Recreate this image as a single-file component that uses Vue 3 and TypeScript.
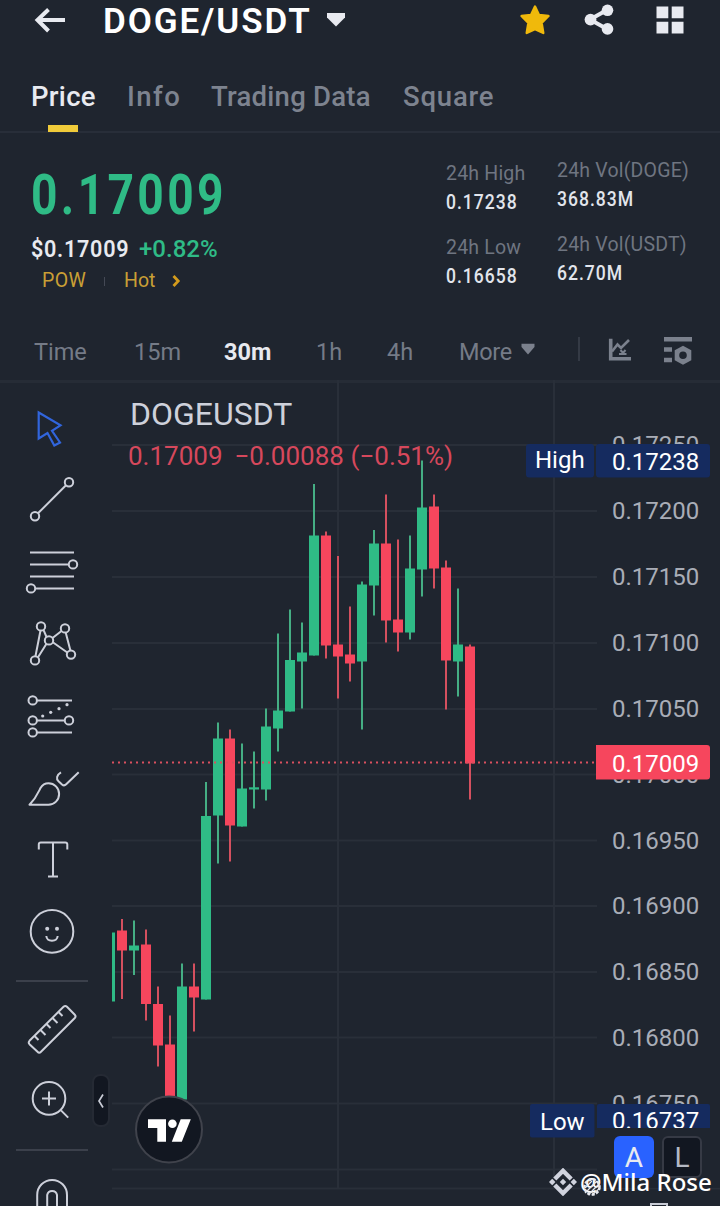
<script setup lang="ts">
interface Candle {
  x: number
  top: number
  bottom: number
  high: number
  low: number
  up: boolean
}

const raw: [number, number, number, number, number][] = [
  [930.5, 950.5, 919, 999, 0],
  [945.5, 950.5, 920.5, 975, 1],
  [944.5, 1004, 929.5, 1020.5, 0],
  [1004, 1045.5, 986.5, 1066.5, 0],
  [1044.5, 1096, 1015.5, 1096, 0],
  [986.5, 1099.5, 963.5, 1099.5, 1],
  [986.5, 997.5, 963.5, 1031.5, 0],
  [816, 999.5, 782, 999.5, 1],
  [738.5, 815.5, 722.5, 863.5, 1],
  [738.5, 825.5, 729.5, 861.5, 0],
  [788.5, 826.5, 743.5, 826.5, 1],
  [787.3, 789.5, 751.5, 808.5, 1],
  [726.5, 789.5, 708.5, 800.5, 1],
  [710.5, 728.5, 633.5, 751.5, 1],
  [660, 711.5, 609.5, 711.5, 1],
  [652.5, 661.5, 622.5, 708.5, 1],
  [535.5, 655.5, 484, 655.5, 1],
  [535.5, 645.5, 531.5, 658.5, 0],
  [644.5, 656.5, 556, 698.5, 0],
  [654.5, 663.5, 606.5, 681.5, 0],
  [584.5, 661.5, 581.5, 729.5, 1],
  [543.5, 585.5, 530, 615.5, 1],
  [543.5, 620.5, 494.5, 642.5, 0],
  [619.5, 632.5, 539.5, 651.5, 0],
  [568.5, 632.5, 535.5, 639.5, 1],
  [507.5, 569.5, 460.5, 596.5, 1],
  [506.5, 568.5, 494.5, 588.5, 0],
  [567.5, 660.5, 560.5, 709.5, 0],
  [644.5, 661.5, 588.5, 696.5, 1],
  [646.5, 763.5, 644.5, 799.5, 0],
]

const candles: Candle[] = raw.map(([top, bottom, high, low, up], i) => ({
  x: 122 + i * 12,
  top,
  bottom,
  high,
  low,
  up: up === 1,
}))

const levels = [
  { y: 445, label: '0.17250' },
  { y: 511, label: '0.17200' },
  { y: 577, label: '0.17150' },
  { y: 643, label: '0.17100' },
  { y: 709, label: '0.17050' },
  { y: 774.5, label: '0.17000' },
  { y: 840.5, label: '0.16950' },
  { y: 906, label: '0.16900' },
  { y: 972, label: '0.16850' },
  { y: 1037.5, label: '0.16800' },
  { y: 1103.5, label: '0.16750' },
]

const tabs = ['Price', 'Info', 'Trading Data', 'Square']
const frames = ['Time', '15m', '30m', '1h', '4h']
const stats = [
  [
    { name: '24h High', value: '0.17238' },
    { name: '24h Low', value: '0.16658' },
  ],
  [
    { name: '24h Vol(DOGE)', value: '368.83M' },
    { name: '24h Vol(USDT)', value: '62.70M' },
  ],
]
</script>

<template>
  <main class="screen">
    <header class="topbar">
      <svg class="back" viewBox="0 0 32 26" width="32" height="26">
        <path d="M31 13H4M14.5 2.500L3.500 13L14.500 24" fill="none" stroke="#e8eaf0" stroke-width="4" />
      </svg>
      <h1 class="pair">DOGE/USDT</h1>
      <svg class="caret" viewBox="0 0 20 16" width="20" height="16">
        <path d="M1 1H19V5.500L10 14.500L1 5.500Z" fill="#e8eaf0" />
      </svg>
      <svg class="star" viewBox="0 0 32 32" width="32" height="32">
        <path d="M16 2.500L20 11L29.500 12L22.600 18.800L24.300 29L16 25.200L7.700 29L9.400 18.800L2.500 12L12 11Z" fill="#f0b90b" stroke="#f0b90b" stroke-width="2.400" stroke-linejoin="round" />
      </svg>
      <svg class="share" viewBox="0 0 32 32" width="32" height="32">
        <path d="M24 6L7 15.500L24 25" fill="none" stroke="#e8eaf0" stroke-width="4" />
        <circle cx="24.500" cy="6.300" r="5.800" fill="#e8eaf0" />
        <circle cx="7.500" cy="15.600" r="5.900" fill="#e8eaf0" />
        <circle cx="24.500" cy="24.900" r="5.800" fill="#e8eaf0" />
      </svg>
      <svg class="apps" viewBox="0 0 28 28" width="28" height="28">
        <path d="M.500 .500H12.300V12.300H.500ZM15.700 .500H27.500V12.300H15.700ZM.500 15.700H12.300V27.500H.500ZM15.700 15.700H27.500V27.500H15.700Z" fill="#e8eaf0" />
      </svg>
    </header>

    <nav class="tabs">
      <a v-for="(t, i) in tabs" :key="t" :class="['tab', 't' + i, { active: i === 0 }]">{{ t }}</a>
    </nav>

    <section class="summary">
      <div class="quote">
        <div class="last"><span>0.17009</span></div>
        <div class="fiat"><b><span>$0.17009</span></b><em>+0.82%</em></div>
        <div class="tags">
          <span class="pow">POW</span>
          <i></i>
          <span class="hot">Hot</span>
          <svg viewBox="0 0 10 14" width="10" height="14">
            <path d="M2.500 2L7.200 7L2.500 12" fill="none" stroke="#d39b1c" stroke-width="2.800" />
          </svg>
        </div>
      </div>
      <div v-for="(col, c) in stats" :key="c" :class="['stats', 's' + c]">
        <dl v-for="s in col" :key="s.name">
          <dt>{{ s.name }}</dt>
          <dd><span>{{ s.value }}</span></dd>
        </dl>
      </div>
    </section>

    <nav class="frames">
      <a v-for="(f, i) in frames" :key="f" :class="['f' + i, { active: i === 2 }]">{{ f }}</a>
      <a class="more">More</a>
      <svg class="tri" viewBox="0 0 14 12" width="14" height="12">
        <path d="M.500 .800H13.500V4L7 11.500L.500 4Z" fill="#7b818d" />
      </svg>
      <i class="sep"></i>
      <svg class="ind" viewBox="0 0 24 24" width="24" height="24">
        <path d="M2.700 .800V20.700H23" fill="none" stroke="#7b818d" stroke-width="3.600" />
        <path d="M4 13.500L9.500 6.500L13 10L21 2" fill="none" stroke="#7b818d" stroke-width="2.600" />
        <path d="M11 16H18.500M12.500 12L15 15L17.500 12" fill="none" stroke="#7b818d" stroke-width="2" />
      </svg>
      <svg class="cfg" viewBox="0 0 28 30" width="28" height="30">
        <path d="M0 3.300H28M0 13.500H8M0 24H8" stroke="#7b818d" stroke-width="4.600" />
        <path fill-rule="evenodd" d="M19 9.800L27.300 14.300V24.200L19 28.700L10.700 24.200V14.300ZM19 15.500A3.800 3.800 0 1 0 19 23.100A3.800 3.800 0 1 0 19 15.500Z" fill="#7b818d" />
      </svg>
    </nav>

    <section class="workspace">
      <aside class="rail">
        <svg class="tool" viewBox="16 393 72 72">
          <path class="pointer" d="M38.700 412.500L60.500 425.300L52 430.800L60 442.500L54.300 445.500L47.500 433L38.700 438.500Z" />
        </svg>
        <svg class="tool" viewBox="16 465 72 72">
          <circle cx="69" cy="482.300" r="4.200" /><circle cx="35" cy="516.300" r="4.200" />
          <path d="M66 485.300L38 513.300" />
        </svg>
        <svg class="tool" viewBox="16 537 72 72">
          <path d="M30 552.400H74M30 564.400H69M30 576.400H74M35 588.400H74" />
          <circle cx="73" cy="564.400" r="4.200" /><circle cx="31" cy="588.400" r="4.200" />
        </svg>
        <svg class="tool" viewBox="16 609 72 72">
          <path d="M40.500 630.500L35.500 656M43.500 629.800L46.500 637M46.500 643.700L38 657.300M52.500 638L61.500 631M65.700 632.500L70.400 650.500M52.800 642.300L67.300 652.500" />
          <circle cx="41" cy="626.400" r="4.200" /><circle cx="65" cy="628.400" r="4.200" />
          <circle cx="49" cy="640.400" r="4.200" /><circle cx="71" cy="654.600" r="4.200" />
          <circle cx="35" cy="660.400" r="4.200" />
        </svg>
        <svg class="tool" viewBox="16 681 72 72">
          <path d="M37 700.400H72M37 720.400H65M37 732.400H72" />
          <circle cx="32.700" cy="700.400" r="4.200" /><circle cx="32.700" cy="720.400" r="4.200" />
          <circle cx="69" cy="720.400" r="4.200" /><circle cx="32.700" cy="732.400" r="4.200" />
          <g class="solid">
            <circle cx="42.700" cy="716" r="1.600" /><circle cx="50.700" cy="712.300" r="1.600" />
            <circle cx="59" cy="708.700" r="1.600" /><circle cx="67" cy="704.700" r="1.600" />
          </g>
        </svg>
        <svg class="tool" viewBox="16 753 72 72">
          <path d="M29.500 804.800C36 798 38 793 40.500 788C42.500 784.500 45 783.200 48.500 783.200A10.500 10.700 0 0 1 48.500 804.800ZM61 772.300C56.500 775 56 779 58.500 781.200L62 784.500C63.500 785.800 65 785.500 66.200 784.300L78.700 772.300" stroke-linejoin="round" />
        </svg>
        <svg class="tool" viewBox="16 825 72 72">
          <path d="M38.800 849.500V844.300Q38.800 842.400 40.800 842.400H65.300Q67.300 842.400 67.300 844.300V849.500M53 842.400V876.600M48 876.600H58" />
        </svg>
        <svg class="tool" viewBox="16 897 72 72">
          <circle cx="52" cy="931.400" r="21.300" />
          <path d="M46.300 936C47 942.300 57 942.300 57.700 936" />
          <g class="solid"><circle cx="47.200" cy="928.700" r="2" /><circle cx="57" cy="928.700" r="2" /></g>
        </svg>
        <hr class="first" />
        <svg class="tool" viewBox="16 993 72 72">
          <path d="M63.500 1006.800Q65.300 1005.200 67 1006.800L74.800 1014.700Q76.300 1016.300 74.800 1018L41 1051.800Q39.200 1053.600 37.500 1051.800L29.500 1044.200Q28 1042.500 29.500 1040.800Z" />
          <path d="M34.500 1036L38.500 1040M40.500 1030L45.500 1035M46.500 1024L50.500 1028M52.500 1018L57.500 1023M58.500 1012L62.500 1016" />
        </svg>
        <svg class="tool" viewBox="16 1065 72 72">
          <circle cx="49" cy="1098.400" r="16.300" />
          <path d="M42 1098.400H56M49 1091.400V1105.400M61 1110.400L68.200 1117.600" />
        </svg>
        <hr class="second" />
        <svg class="tool" viewBox="16 1161 72 72">
          <path d="M37.200 1210V1195A14.800 15 0 0 1 67 1195V1210M47.200 1210V1195A5 5 0 0 1 57 1195V1210" />
        </svg>
      </aside>

      <svg class="plot" viewBox="112 380 608 826" width="608" height="826">
        <g class="grid">
          <line v-for="l in levels" :key="l.y" x1="112" x2="597" :y1="l.y" :y2="l.y" />
          <line x1="112" x2="597" y1="1169.500" y2="1169.500" />
          <line x1="112" x2="720" y1="1188.500" y2="1188.500" />
          <line x1="338" x2="338" y1="380" y2="1188" />
          <line x1="554" x2="554" y1="380" y2="1188" />
        </g>
        <rect x="112" y="932.500" width="3" height="69" fill="#2fbb86" />
        <g v-for="c in candles" :key="c.x" :class="c.up ? 'up' : 'down'">
          <rect class="wick" :x="c.x - 1" :y="c.high" width="2" :height="c.low - c.high" />
          <rect :x="c.x - 5" :y="c.top" width="10" :height="c.bottom - c.top" />
        </g>
        <line x1="112" x2="596" y1="762.500" y2="762.500" stroke="#d9505f" stroke-width="2" stroke-dasharray="2 4" />

        <text class="symbol" x="130" y="424.500">DOGEUSDT</text>
        <g class="change">
          <text x="128" y="464.500">0.17009</text>
          <text x="234.500" y="464.500">−0.00088</text>
          <text x="350.500" y="464.500">(−0.51%)</text>
        </g>

        <g class="axis">
          <text v-for="l in levels" :key="l.label" x="612" :y="l.y + 8.200">{{ l.label }}</text>
        </g>

        <g class="tag">
          <rect x="526" y="444" width="68" height="33.500" rx="3" />
          <rect x="596" y="444" width="114" height="33.500" rx="3" />
          <text x="535" y="467.500">High</text>
          <text x="612" y="469.500">0.17238</text>
          <rect x="530" y="1104" width="64.500" height="33.500" rx="2" />
          <rect x="597" y="1104" width="113" height="33.500" rx="2" />
          <text x="540" y="1129.500">Low</text>
          <text x="612" y="1129.300">0.16737</text>
        </g>
        <rect x="597" y="1128" width="123" height="59.500" fill="#1f252f" />
        <path d="M596 745H707Q710 745 710 748V776.500Q710 779.500 707 779.500H596Z" fill="#f6465d" />
        <text class="now" x="612" y="771.500">0.17009</text>

        <path d="M651 1206V1204H667V1206" fill="none" stroke="#c9ccd6" stroke-width="2" />

        <circle cx="169" cy="1129.500" r="33" fill="#121721" stroke="#40434c" stroke-width="2" />
        <path d="M148 1119.300H166V1141.700H157.300V1128H148ZM180.700 1119.300H190.800L181.800 1141.700H171.800Z" fill="#fff" />
        <circle cx="172.400" cy="1123.700" r="4.300" fill="#fff" />
      </svg>

      <div class="handle">
        <svg viewBox="0 0 8 16" width="8" height="16">
          <path d="M6 1.500L2 8L6 14.500" fill="none" stroke="#c9ccd6" stroke-width="1.700" />
        </svg>
      </div>
      <div class="scale">
        <button class="auto">A</button>
        <button class="log">L</button>
      </div>
      <div class="author">
        <svg class="mark" viewBox="0 0 28 28" width="28" height="28">
          <path d="M5.800 11L14 2.800L22.200 11M5.800 17L14 25.200L22.200 17" fill="none" stroke="#d0d3de" stroke-width="4.400" />
          <path d="M14 10.800L17.200 14L14 17.200L10.800 14ZM3.200 10.800L6.400 14L3.200 17.200L0 14ZM24.800 10.800L28 14L24.800 17.200L21.600 14Z" fill="#d0d3de" />
        </svg>
        <span>@Mila Rose</span>
        <svg class="gear" viewBox="0 0 20 20" width="20" height="20">
          <circle cx="10" cy="10" r="7.500" fill="none" stroke="#e8eaf0" stroke-width="2.500" stroke-dasharray="3 1.500" />
          <path d="M3 16L15 4M6 18L17 7M3 11L10 4M10 18L18 11" stroke="#e8eaf0" stroke-width="1.300" />
        </svg>
      </div>
    </section>
  </main>
</template>

<style>
body {
  margin: 0;
  background: #1f252f;
}
</style>

<style scoped>
.screen {
  width: 720px;
  height: 1206px;
  overflow: hidden;
  background: #1f252f;
  color: #e8eaf0;
  font-family: Roboto, "Noto Sans", sans-serif;
  white-space: nowrap;
}
svg {
  display: block;
  flex: none;
}
.topbar {
  display: flex;
  align-items: center;
  height: 42px;
  padding: 0 36px 0 34px;
  box-sizing: border-box;
}
.back {
  margin-top: -3px;
}
.pair {
  width: 221px;
  margin: 2px 0 0 37px;
  font-size: 35px;
  font-weight: 600;
  line-height: 42px;
  letter-spacing: 1.9px;
  color: #fff;
}
.caret {
  margin: -3px 0 0 2px;
}
.star {
  margin: -3px 0 0 173px;
}
.share {
  margin: -3px 0 0 32px;
}
.apps {
  margin: -3px 0 0 auto;
}
.tabs {
  display: grid;
  grid-template-columns: 96px 84px 192px 200px;
  height: 91px;
  padding: 18px 0 0 31px;
  box-sizing: border-box;
  border-bottom: 2px solid #282e39;
}
.tab {
  position: relative;
  height: 71px;
  font-size: 27.5px;
  font-weight: 500;
  line-height: 73px;
  letter-spacing: 0.5px;
  color: #7d838f;
}
.t1 {
  letter-spacing: 1.5px;
}
.t2 {
  letter-spacing: 0.25px;
}
.t3 {
  letter-spacing: 0.8px;
}
.tab.active {
  letter-spacing: 0.3px;
  color: #e8eaf0;
}
.tab.active::after {
  content: "";
  position: absolute;
  left: 17px;
  bottom: -1px;
  width: 30px;
  height: 7px;
  background: #f0cb3a;
}
.summary {
  display: flex;
  height: 187px;
  padding-left: 31px;
  box-sizing: border-box;
}
.quote {
  width: 415px;
  padding-top: 30px;
}
.last {
  height: 64px;
  font-size: 55px;
  font-weight: 700;
  line-height: 64px;
  color: #2fbb86;
}
.last span {
  display: inline-block;
  transform: scaleX(0.84);
  transform-origin: 0 50%;
  letter-spacing: 4px;
}
.fiat {
  display: flex;
  height: 44px;
  font-size: 24px;
  line-height: 44px;
  color: #2fbb86;
}
.fiat b {
  width: 108px;
  font-weight: 600;
  color: #e8eaf0;
}
.fiat b span {
  display: inline-block;
  transform: scaleX(0.9);
  transform-origin: 0 50%;
  letter-spacing: 0.8px;
}
.fiat em {
  font-style: normal;
  font-weight: 500;
}
.tags {
  display: flex;
  align-items: center;
  height: 20px;
  padding-left: 11px;
  font-size: 19.5px;
  line-height: 20px;
  color: #c99f35;
}
.pow {
  width: 62px;
  letter-spacing: 0.4px;
}
.tags i {
  width: 1px;
  height: 9px;
  background: #444955;
}
.hot {
  width: 47px;
  margin-left: 19px;
}
.stats {
  width: 111px;
}
.s0 {
  padding-top: 27px;
}
.s1 {
  padding-top: 24px;
}
.stats dl {
  margin: 0;
  height: 74px;
}
.stats dt {
  height: 28px;
  font-size: 19.5px;
  line-height: 27px;
  letter-spacing: 0.2px;
  color: #6f7581;
}
.stats dd {
  height: 30px;
  margin: 0;
  font-size: 19.5px;
  font-weight: 500;
  line-height: 30px;
  color: #e2e5ec;
}
.stats dd span {
  display: inline-block;
  transform: scaleX(0.9);
  transform-origin: 0 50%;
  letter-spacing: 1.1px;
}
.frames {
  display: flex;
  align-items: center;
  height: 63px;
  padding-left: 34px;
  box-sizing: border-box;
  border-bottom: 3px solid #262c36;
  font-size: 23.5px;
  color: #757b87;
}
.frames a {
  margin-top: 3px;
  line-height: 60px;
}
.f0 {
  width: 100px;
}
.f1 {
  width: 90px;
}
.f2 {
  width: 92px;
}
.f3 {
  width: 71px;
}
.f4 {
  width: 72px;
}
.more {
  width: 62px;
  letter-spacing: -0.3px;
}
.frames .active {
  font-weight: 700;
  color: #e8eaf0;
}
.tri {
  margin-top: -2px;
}
.sep {
  width: 2px;
  height: 24px;
  margin: -2px 28px 0 43px;
  background: #343a45;
}
.ind {
  margin-top: -1px;
}
.cfg {
  margin: 1px 0 0 32px;
}
.workspace {
  position: relative;
  display: flex;
  height: 826px;
  margin-top: -3px;
}
.rail {
  width: 96px;
  padding: 13px 0 0 16px;
  height: 813px;
  overflow: hidden;
}
.tool {
  width: 72px;
  height: 72px;
  fill: none;
  stroke: #cdd0da;
  stroke-width: 2;
}
.tool .pointer {
  stroke: #3165dc;
  stroke-width: 2.2;
}
.tool .solid {
  fill: #cdd0da;
  stroke: none;
}
.rail hr {
  width: 72px;
  height: 2px;
  margin: 11px 0;
  border: 0;
  background: #3b404b;
}
.rail .second {
  margin: 12px 0 10px;
}
.plot {
  flex: none;
}
.grid line {
  stroke: #292f39;
  stroke-width: 2;
}
.up {
  fill: #2fbb86;
}
.down {
  fill: #f6465d;
}
.up .wick {
  fill: #45ae84;
}
.down .wick {
  fill: #d4505f;
}
.symbol {
  font-size: 32px;
  fill: #ced1db;
}
.change {
  font-size: 26px;
  fill: #d6485c;
}
.axis {
  font-size: 24px;
  fill: #a9adb7;
}
.tag {
  font-size: 24px;
}
.tag rect {
  fill: #152b5f;
}
.tag text,
.now {
  fill: #fff;
  font-size: 24px;
}
.handle {
  position: absolute;
  left: 92px;
  top: 694px;
  display: flex;
  align-items: center;
  justify-content: center;
  width: 18px;
  height: 53px;
  box-sizing: border-box;
  border: 2px solid #252a34;
  border-radius: 8px;
  background: #121721;
}
.scale {
  position: absolute;
  left: 614px;
  top: 756px;
  display: flex;
  gap: 8px;
}
.scale button {
  width: 40px;
  height: 42px;
  padding: 0;
  border: 0;
  border-radius: 6px;
  background: #2962ff;
  color: #e8eaf0;
  font: 28px/43px Roboto, sans-serif;
}
.scale .log {
  border: 2px solid #363a45;
  background: #121721;
  color: #b5b9c4;
  line-height: 40px;
}
.author {
  position: absolute;
  left: 549px;
  top: 786px;
  display: flex;
  align-items: center;
  height: 32px;
  color: #fff;
  font: 500 24px/32px "Noto Sans", sans-serif;
}
.author span {
  margin-left: 3px;
}
.gear {
  position: absolute;
  left: 33px;
  top: 11px;
}
</style>
